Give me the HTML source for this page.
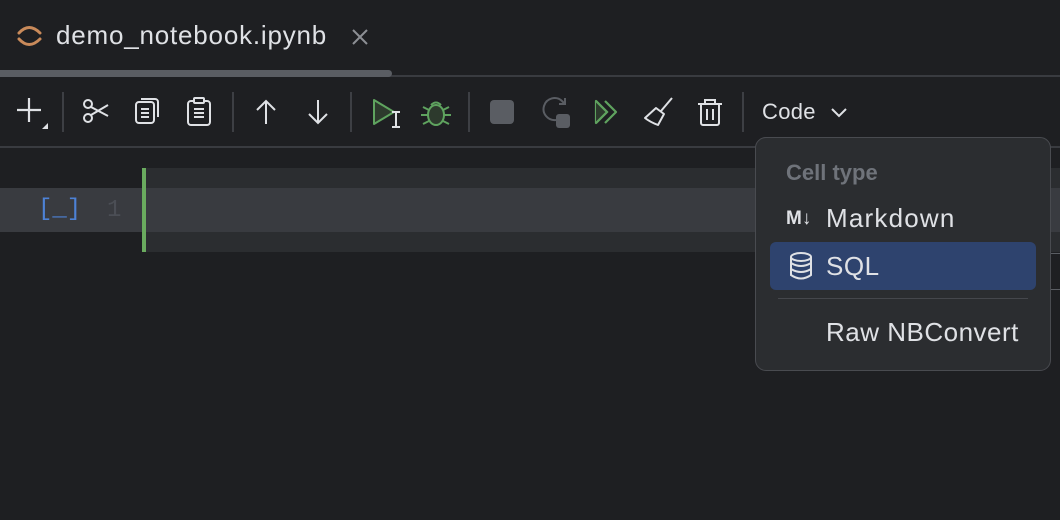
<!DOCTYPE html>
<html><head><style>
*{margin:0;padding:0;box-sizing:border-box}
body{width:1060px;height:520px;background:#1e1f22;font-family:"Liberation Sans",sans-serif;position:relative;overflow:hidden;color:#dfe1e5}
.abs{position:absolute}
svg{position:absolute}
.sep{position:absolute;width:2px;height:40px;top:92px;background:#3d3f44}
</style></head><body>
<svg style="left:16px;top:22px" width="28" height="28" viewBox="0 0 28 28"><path d="M3 11 Q13 0 24 11" stroke="#c98a5a" stroke-width="3" fill="none" stroke-linecap="round"/><path d="M3 17 Q13 28 24 17" stroke="#c98a5a" stroke-width="3" fill="none" stroke-linecap="round"/></svg>
<div class="abs" style="left:56px;top:20px;font-size:26px;letter-spacing:0.8px;color:#dfe1e5">demo_notebook.ipynb</div>
<svg style="left:350px;top:27px" width="20" height="20"><path d="M3 3L17 17M17 3L3 17" stroke="#8c8f94" stroke-width="2"/></svg>
<div class="abs" style="left:0;top:75px;width:1060px;height:2px;background:#393b40"></div>
<div class="abs" style="left:0;top:70px;width:392px;height:7px;background:#5a5d63;border-radius:0 4px 4px 0"></div>
<svg style="left:14px;top:95px" width="36" height="36"><path d="M15 3V27M3 15H27" stroke="#dfe1e5" stroke-width="2.2"/><path d="M34 28V34H28Z" fill="#dfe1e5"/></svg>
<div class="sep" style="left:62px"></div>
<svg style="left:80px;top:96px" width="32" height="32"><circle cx="8" cy="8" r="4" stroke="#dfe1e5" stroke-width="2" fill="none"/><circle cx="8" cy="22" r="4" stroke="#dfe1e5" stroke-width="2" fill="none"/><path d="M11 11L28 20M11 19L28 9" stroke="#dfe1e5" stroke-width="2"/></svg>
<svg style="left:134px;top:97px" width="28" height="30"><rect x="2" y="5" width="18" height="21" rx="3" stroke="#dfe1e5" stroke-width="2" fill="none"/><path d="M7 2H21a3 3 0 0 1 3 3V20" stroke="#dfe1e5" stroke-width="2" fill="none"/><path d="M7 12H15M7 16H15M7 20H15" stroke="#dfe1e5" stroke-width="2"/></svg>
<svg style="left:186px;top:96px" width="28" height="32"><rect x="2" y="5" width="22" height="24" rx="3" stroke="#dfe1e5" stroke-width="2" fill="none"/><rect x="8" y="2" width="10" height="5" rx="1" stroke="#dfe1e5" stroke-width="2" fill="#1e1f22"/><path d="M8 13H18M8 17H18M8 21H18" stroke="#dfe1e5" stroke-width="2"/></svg>
<div class="sep" style="left:232px"></div>
<svg style="left:254px;top:98px" width="24" height="28"><path d="M12 26V3M3 12L12 3L21 12" stroke="#dfe1e5" stroke-width="2" fill="none"/></svg>
<svg style="left:306px;top:98px" width="24" height="28"><path d="M12 2V25M3 16L12 25L21 16" stroke="#dfe1e5" stroke-width="2" fill="none"/></svg>
<div class="sep" style="left:350px"></div>
<svg style="left:370px;top:96px" width="34" height="34"><path d="M4 4V28L24 16Z" stroke="#5fa35f" stroke-width="2" fill="#2d3a2d" stroke-linejoin="round"/><path d="M22 16H30M26 16V31M22 31H30" stroke="#dfe1e5" stroke-width="2"/></svg>
<svg style="left:419px;top:97px" width="34" height="32"><ellipse cx="17" cy="18" rx="8" ry="10" stroke="#5fa35f" stroke-width="2" fill="#2d3a2d"/><path d="M12 8Q17 3 22 8M2 18H9M25 18H32M4 10L10 13M30 10L24 13M4 27L10 24M30 27L24 24" stroke="#5fa35f" stroke-width="2" fill="none"/></svg>
<div class="sep" style="left:468px"></div>
<div class="abs" style="left:490px;top:100px;width:24px;height:24px;background:#5a5d63;border-radius:4px"></div>
<svg style="left:540px;top:96px" width="32" height="34"><path d="M16 24A11 11 0 1 1 22 5L25 8" stroke="#5a5d63" stroke-width="2" fill="none"/><path d="M25 2V8H19" stroke="#5a5d63" stroke-width="2" fill="none"/><rect x="16" y="18" width="14" height="14" rx="3" fill="#5a5d63"/></svg>
<svg style="left:592px;top:98px" width="30" height="28"><path d="M4 3L15 14L4 25ZM13 3L24 14L13 25" stroke="#5fa35f" stroke-width="2.2" fill="none" stroke-linejoin="round"/><path d="M4 3L15 14L4 25" fill="#2d3a2d" stroke="#5fa35f" stroke-width="2.2"/></svg>
<svg style="left:642px;top:96px" width="32" height="32"><path d="M30 2L19 15" stroke="#dfe1e5" stroke-width="2"/><path d="M14 12L22 18L16 29Q8 26 3 22Z" stroke="#dfe1e5" stroke-width="2" fill="none" stroke-linejoin="round"/></svg>
<svg style="left:696px;top:97px" width="28" height="30"><path d="M2 7H26M9 7V3H19V7" stroke="#dfe1e5" stroke-width="2" fill="none"/><path d="M5 7V26a2 2 0 0 0 2 2H21a2 2 0 0 0 2-2V7" stroke="#dfe1e5" stroke-width="2" fill="none"/><path d="M11 12V23M17 12V23" stroke="#dfe1e5" stroke-width="2"/></svg>
<div class="sep" style="left:742px"></div>
<div class="abs" style="left:762px;top:99px;font-size:22px;letter-spacing:0.3px">Code</div>
<svg style="left:830px;top:106px" width="18" height="14"><path d="M2 3L9 10L16 3" stroke="#dfe1e5" stroke-width="2" fill="none"/></svg>
<div class="abs" style="left:0;top:146px;width:1060px;height:2px;background:#393b40"></div>
<div class="abs" style="left:146px;top:168px;width:914px;height:84px;background:#2b2d30"></div>
<div class="abs" style="left:0;top:188px;width:1060px;height:44px;background:#393b40"></div>
<div class="abs" style="left:142px;top:168px;width:4px;height:84px;background:#6aab5f"></div>
<div class="abs" style="left:38px;top:196px;font-family:'Liberation Mono',monospace;font-size:24px;color:#4d82d6">[_]</div>
<div class="abs" style="left:107px;top:197px;font-family:'Liberation Mono',monospace;font-size:24px;color:#4b4e55">1</div>
<div class="abs" style="left:1036px;top:253px;width:24px;height:1px;background:#5a5d63"></div>
<div class="abs" style="left:1036px;top:289px;width:24px;height:1px;background:#5a5d63"></div>
<div class="abs" style="left:755px;top:137px;width:296px;height:234px;background:#2b2d30;border:1.5px solid #494b50;border-radius:11px"></div>
<div class="abs" style="left:786px;top:160px;font-size:22px;font-weight:bold;color:#6f737a">Cell type</div>
<div class="abs" style="left:786px;top:208px;font-size:19px;font-weight:bold;color:#dfe1e5">M↓</div>
<div class="abs" style="left:826px;top:203px;font-size:26px;letter-spacing:1.2px">Markdown</div>
<div class="abs" style="left:770px;top:242px;width:266px;height:48px;background:#2e436e;border-radius:6px"></div>
<svg style="left:788px;top:251px" width="28" height="30"><ellipse cx="13" cy="6" rx="10" ry="4" stroke="#dfe1e5" stroke-width="2" fill="none"/><path d="M3 6V24Q13 31 23 24V6M3 12Q13 18 23 12M3 18Q13 24 23 18" stroke="#dfe1e5" stroke-width="2" fill="none"/></svg>
<div class="abs" style="left:826px;top:251px;font-size:26px;letter-spacing:0.5px">SQL</div>
<div class="abs" style="left:778px;top:298px;width:250px;height:1px;background:#45474c"></div>
<div class="abs" style="left:826px;top:317px;font-size:26px;letter-spacing:0.5px">Raw NBConvert</div>
</body></html>
